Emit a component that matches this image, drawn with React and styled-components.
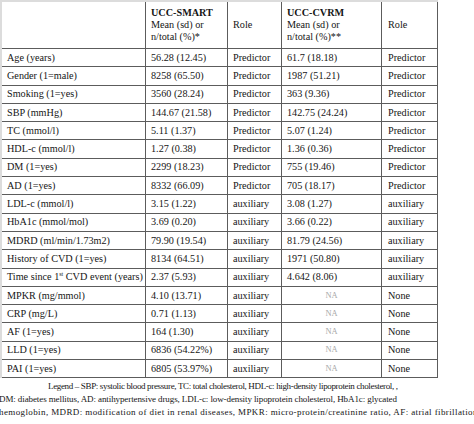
import styled, { createGlobalStyle } from 'styled-components';

const GlobalStyle = createGlobalStyle`
	html, body {
		margin: 0;
		padding: 0;
		background: #ffffff;
		overflow: hidden;
	}
	body {
		width: 474px;
		height: 424px;
		font-family: "Liberation Serif", "Times New Roman", serif;
		color: #151515;
	}
`;

const rows = [
	['Age (years)', '56.28 (12.45)', 'Predictor', '61.7 (18.18)', 'Predictor'],
	['Gender (1=male)', '8258 (65.50)', 'Predictor', '1987 (51.21)', 'Predictor'],
	['Smoking (1=yes)', '3560 (28.24)', 'Predictor', '363 (9.36)', 'Predictor'],
	['SBP (mmHg)', '144.67 (21.58)', 'Predictor', '142.75 (24.24)', 'Predictor'],
	['TC (mmol/l)', '5.11 (1.37)', 'Predictor', '5.07 (1.24)', 'Predictor'],
	['HDL-c (mmol/l)', '1.27 (0.38)', 'Predictor', '1.36 (0.36)', 'Predictor'],
	['DM (1=yes)', '2299 (18.23)', 'Predictor', '755 (19.46)', 'Predictor'],
	['AD (1=yes)', '8332 (66.09)', 'Predictor', '705 (18.17)', 'Predictor'],
	['LDL-c (mmol/l)', '3.15 (1.22)', 'auxiliary', '3.08 (1.27)', 'auxiliary'],
	['HbA1c (mmol/mol)', '3.69 (0.20)', 'auxiliary', '3.66 (0.22)', 'auxiliary'],
	['MDRD (ml/min/1.73m2)', '79.90 (19.54)', 'auxiliary', '81.79 (24.56)', 'auxiliary'],
	['History of CVD (1=yes)', '8134 (64.51)', 'auxiliary', '1971 (50.80)', 'auxiliary'],
	['time', '2.37 (5.93)', 'auxiliary', '4.642 (8.06)', 'auxiliary'],
	['MPKR (mg/mmol)', '4.10 (13.71)', 'auxiliary', null, 'None'],
	['CRP (mg/L)', '0.71 (1.13)', 'auxiliary', null, 'None'],
	['AF (1=yes)', '164 (1.30)', 'auxiliary', null, 'None'],
	['LLD (1=yes)', '6836 (54.22%)', 'auxiliary', null, 'None'],
	['PAI (1=yes)', '6805 (53.97%)', 'auxiliary', null, 'None'],
];

const widths = [144, 82, 54, 100, 56];

const Page = styled.div`
	width: 474px;
	height: 424px;
	overflow: hidden;
`;

const Table = styled.table`
	table-layout: fixed;
	border-collapse: separate;
	border-spacing: 0;
	width: 438px;
	border-top: 2px solid #dcdcdc;
	border-left: 2px solid #dcdcdc;
	font-size: 10.2px;
`;

const Col = styled.col`
	width: ${({ $w }) => $w}px;
`;

const HeadRow = styled.tr`
	height: 47px;
`;

const Row = styled.tr`
	height: 18.3px;
`;

const Cell = styled.td`
	box-sizing: border-box;
	padding: 0 0 0 ${({ $pad }) => $pad || 5}px;
	border-right: 1px solid #5c5c5c;
	border-bottom: 1px solid #5c5c5c;
	vertical-align: middle;
	white-space: nowrap;
	overflow: hidden;
	line-height: 12px;
`;

const Group = styled.div`
	font-weight: 700;
`;

const NaCell = styled(Cell)`
	padding: 0;
	text-align: center;
	color: #a8a8a8;
	font-size: 8.4px;
`;

const Sup = styled.sup`
	font-size: 6px;
	line-height: 0;
`;

const Legend = styled.div`
	margin: 2px 0 0 -1px;
	width: 520px;
	font-size: 9px;
	line-height: 13px;
	white-space: nowrap;
`;

const LegendLine = styled.div`
	padding-left: ${({ $indent }) => $indent || 0}px;
	letter-spacing: ${({ $track }) => $track || 0}px;
`;

const FirstCol = ({ label }) =>
	label === 'time' ? (
		<>
			Time since 1<Sup>st</Sup> CVD event (years)
		</>
	) : (
		label
	);

export default function App() {
	return (
		<Page>
			<GlobalStyle />
			<Table>
				<colgroup>
					{widths.map((w, i) => (
						<Col key={i} $w={w} />
					))}
				</colgroup>
				<tbody>
					<HeadRow>
						<Cell $pad={5} />
						<Cell>
							<Group>UCC-SMART</Group>
							Mean (sd) or
							<br />
							n/total (%)*
						</Cell>
						<Cell>Role</Cell>
						<Cell>
							<Group>UCC-CVRM</Group>
							Mean (sd) or
							<br />
							n/total (%)**
						</Cell>
						<Cell $pad={6}>Role</Cell>
					</HeadRow>
					{rows.map((r) => (
						<Row key={r[0]}>
							<Cell $pad={5}>
								<FirstCol label={r[0]} />
							</Cell>
							<Cell>{r[1]}</Cell>
							<Cell>{r[2]}</Cell>
							{r[3] ? <Cell>{r[3]}</Cell> : <NaCell>NA</NaCell>}
							<Cell $pad={6}>{r[4]}</Cell>
						</Row>
					))}
				</tbody>
			</Table>
			<Legend>
				<LegendLine $indent={49} $track={-0.35}>
					Legend – SBP: systolic blood pressure, TC: total cholesterol, HDL-c: high-density lipoprotein cholesterol, ,
				</LegendLine>
				<LegendLine $track={-0.1}>
					DM: diabetes mellitus, AD: antihypertensive drugs, LDL-c: low-density lipoprotein cholesterol, HbA1c: glycated
				</LegendLine>
				<LegendLine $track={0.39}>
					hemoglobin, MDRD: modification of diet in renal diseases, MPKR: micro-protein/creatinine ratio, AF: atrial fibrillation
				</LegendLine>
			</Legend>
		</Page>
	);
}
